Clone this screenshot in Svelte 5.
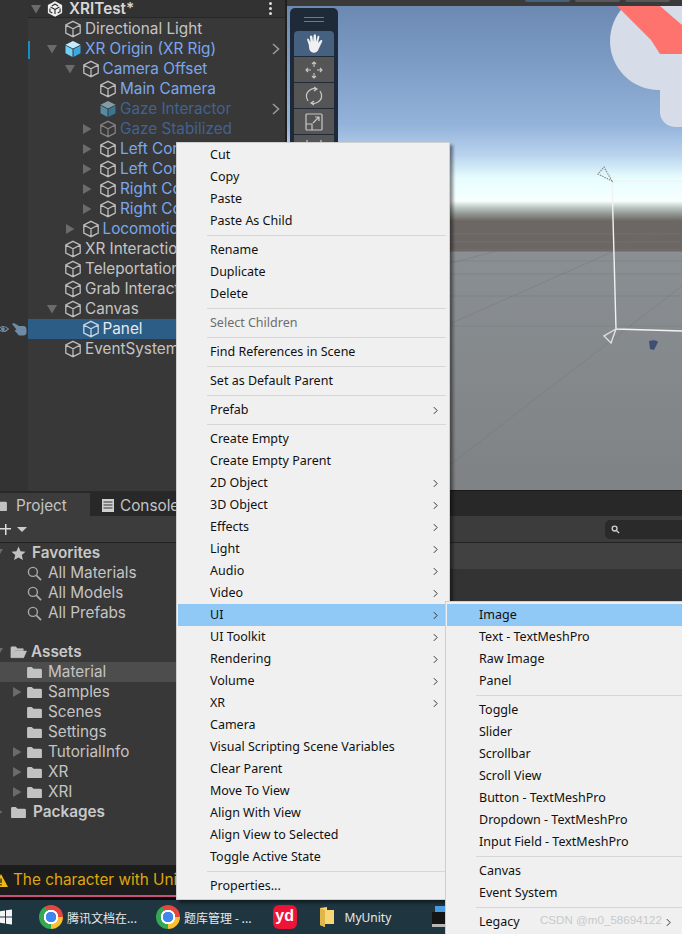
<script>
  const rows = [
    { t: 'Directional Light', d: 0, i: 'cube', c: '' },
    { t: 'XR Origin (XR Rig)', d: 0, a: 'down', i: 'prefab', c: 'blue', more: true, mark: true },
    { t: 'Camera Offset', d: 1, a: 'down', i: 'cube', c: 'blue' },
    { t: 'Main Camera', d: 2, i: 'cube', c: 'blue' },
    { t: 'Gaze Interactor', d: 2, i: 'prefab', c: 'dim', more: true, fade: true },
    { t: 'Gaze Stabilized', d: 2, a: 'right', i: 'cube', c: 'dim', fade: true },
    { t: 'Left Controller', d: 2, a: 'right', i: 'cube', c: 'blue' },
    { t: 'Left Controller', d: 2, a: 'right', i: 'cube', c: 'blue' },
    { t: 'Right Controller', d: 2, a: 'right', i: 'cube', c: 'blue' },
    { t: 'Right Controller', d: 2, a: 'right', i: 'cube', c: 'blue' },
    { t: 'Locomotion System', d: 1, a: 'right', i: 'cube', c: 'blue' },
    { t: 'XR Interaction Manager', d: 0, i: 'cube', c: '' },
    { t: 'Teleportation Area', d: 0, i: 'cube', c: '' },
    { t: 'Grab Interactable', d: 0, i: 'cube', c: '' },
    { t: 'Canvas', d: 0, a: 'down', i: 'cube', c: '' },
    { t: 'Panel', d: 1, i: 'cube', c: 'white', sel: true },
    { t: 'EventSystem', d: 0, i: 'cube', c: '' }
  ];
  const mainMenu = ['Cut','Copy','Paste','Paste As Child','-','Rename','Duplicate','Delete','-','~Select Children','-','Find References in Scene','-','Set as Default Parent','-','Prefab>','-','Create Empty','Create Empty Parent','2D Object>','3D Object>','Effects>','Light>','Audio>','Video>','*UI>','UI Toolkit>','Rendering>','Volume>','XR>','Camera','Visual Scripting Scene Variables','Clear Parent','Move To View','Align With View','Align View to Selected','Toggle Active State','-','Properties...'];
  const subMenu = ['*Image','Text - TextMeshPro','Raw Image','Panel','-','Toggle','Slider','Scrollbar','Scroll View','Button - TextMeshPro','Dropdown - TextMeshPro','Input Field - TextMeshPro','-','Canvas','Event System','-','Legacy>'];
  const parse = (s) => ({
    sep: s === '-',
    hot: s[0] === '*',
    off: s[0] === '~',
    more: s.endsWith('>'),
    label: s.replace(/^[*~]/, '').replace(/>$/, '')
  });
  const favs = ['All Materials', 'All Models', 'All Prefabs'];
  const assets = [
    { t: 'Material', hl: true }, { t: 'Samples', a: true }, { t: 'Scenes' }, { t: 'Settings' },
    { t: 'TutorialInfo', a: true }, { t: 'XR', a: true }, { t: 'XRI', a: true }
  ];
</script>

{#snippet cube(kind, fade)}
  {#if kind === 'prefab'}
    <svg class="cube" class:fade viewBox="0 0 18 18">
      <path d="M9 1 16.5 4.8 9 8.6 1.5 4.8Z" fill="#c4ecff"/>
      <path d="M1.5 5.6 8.5 9.2V17L1.5 13.3Z" fill="#6fd0fa"/>
      <path d="M16.5 5.6 9.5 9.2V17L16.5 13.3Z" fill="#3aa9e0"/>
    </svg>
  {:else}
    <svg class="cube" class:fade viewBox="0 0 18 18" fill="none" stroke="#bdbdbd" stroke-width="1.3">
      <path d="M9 1.3 16.2 5V13L9 16.7 1.8 13V5ZM1.8 5 9 8.8 16.2 5M9 8.8V16.7"/>
    </svg>
  {/if}
{/snippet}

{#snippet tri(dir)}
  <svg class="tri" viewBox="0 0 10 10">
    {#if dir === 'down'}<path d="M0 1H10L5 9.5Z"/>{:else}<path d="M1 0V10L9.5 5Z"/>{/if}
  </svg>
{/snippet}

{#snippet folder()}
  <svg class="folder" viewBox="0 0 16 14"><path d="M0 2.5Q0 1 1.5 1H5L7 3H14.5Q16 3 16 4.5V12Q16 13 14.5 13H1.5Q0 13 0 12Z" fill="#c2c2c2"/></svg>
{/snippet}

{#snippet menu(items, cls)}
  <div class="menu {cls}">
    {#each items.map(parse) as m}
      {#if m.sep}
        <div class="sep"></div>
      {:else}
        <div class="item" class:hot={m.hot} class:off={m.off}>
          <span>{m.label}</span>
          {#if m.more}
            <svg class="chev" viewBox="0 0 6 10" fill="none" stroke="#333" stroke-width="1.2"><path d="M1 1 5 5 1 9"/></svg>
          {/if}
        </div>
      {/if}
    {/each}
  </div>
{/snippet}

<div class="page">
  <div class="top">
    <section class="hier">
      <div class="gutter">
        <svg class="eye" viewBox="0 0 12 10" fill="none" stroke="#6f8aa3" stroke-width="1.3"><path d="M-2 5Q4 -1 10 5 4 11-2 5Z"/><circle cx="3.5" cy="5" r="1.6" fill="#6f8aa3"/></svg>
        <svg class="pick" viewBox="0 0 16 14"><path d="M1 2 3 1 8 4H13Q15.5 4.5 15.5 7V11Q15 13.5 12 13.5H8L3.5 8.5 5.5 7.5 1 2Z" fill="#6f8aa3"/></svg>
      </div>
      <div class="tree">
        <header class="scenehead">
          <svg class="tri big" viewBox="0 0 10 10"><path d="M0 1H10L5 9.5Z"/></svg>
          <svg class="unity" viewBox="0 0 18 18"><path d="M9 .3 17 4.6V13.4L9 17.7 1 13.4V4.6Z" fill="#f0f0f0"/><path d="M9 9.5V14.5M9 9.5 4 6.8M9 9.5 14 6.8M9 3.5 5.5 5.5M9 3.5 12.5 5.5M3.3 8.5V12L6 13.5M14.7 8.5V12L12 13.5" stroke="#2e2e2e" stroke-width="1.3" fill="none"/></svg>
          <b>XRITest*</b>
          <span class="kebab"><i></i><i></i><i></i></span>
        </header>
        {#each rows as r}
          <div class="row {r.c}" class:sel={r.sel} style="--d:{r.d}">
            {#if r.mark}<span class="mark"></span>{/if}
            <span class="arrow">{#if r.a}{@render tri(r.a)}{/if}</span>
            {@render cube(r.i, r.fade)}
            <span class="label">{r.t}</span>
            {#if r.more}
              <svg class="go" viewBox="0 0 8 12" fill="none" stroke="#9a9a9a" stroke-width="1.6"><path d="M1 1 6.5 6 1 11"/></svg>
            {/if}
          </div>
        {/each}
      </div>
    </section>
    <section class="scene">
      <svg class="world" viewBox="0 0 395 484" preserveAspectRatio="none">
        <g stroke="#6f7376" stroke-width="1" opacity=".35" fill="none">
          <path d="M0 255H395M0 268H395M0 290H395M0 320H395M0 300 210 245M0 390 395 215M130 484 395 280"/>
        </g>
        <g stroke="#7d7673" stroke-width="1" opacity=".6" fill="none">
          <path d="M0 228H395M0 236H395M0 244H395"/>
        </g>
        <g class="blob">
          <circle cx="372" cy="35" r="49" fill="#d6dce8"/>
          <rect x="373" y="40" width="40" height="81" rx="15" fill="#d6dce8"/>
          <path d="M330 0H373L395 19V48H373L364 34Z" fill="#fe736e"/>
        </g>
        <g fill="none" stroke="#f2f2f2" stroke-width="1.4">
          <path d="M325 175 329 323 395 325M325 175H395"/>
          <path d="M325 175 317 161 311 168Z" stroke="#8a8a8a" stroke-dasharray="1.5 1" stroke-width="1.2"/>
          <path d="M329 323 317 330 324 337Z" stroke="#e0e0e0"/>
        </g>
        <path d="M362 335Q369 333 371 336L367 344 363 343Z" fill="#3d4f72"/>
      </svg>
      <div class="topedge"><span class="tb blue-tb"></span><span class="tb"></span><span class="tb"></span></div>
      <div class="tools">
        <div class="grip"></div>
        <button class="active" aria-label="Hand">
          <svg class="hand" viewBox="0 0 20 20" fill="#f0f0f0"><path d="M5 11 3.5 6.5Q4 5 5 6L6.5 9 6 3.5Q7 2.5 8 3.5L8.8 8.5 9.3 2.5Q10.3 1.5 11.3 2.5L11.3 8.5 12.8 3.5Q14 3 14.3 4.2L13 9.5 15.5 7Q17 6.8 16.8 8L13.5 15Q12.5 18 9.5 18 6.5 18 5.5 15Z"/></svg>
        </button>
        <button aria-label="Move">
          <svg viewBox="0 0 20 20" fill="none" stroke="#c8c8c8" stroke-width="1.1"><path d="M10 2V7M10 13V18M2 10H7M13 10H18M8 4 10 2 12 4M8 16 10 18 12 16M4 8 2 10 4 12M16 8 18 10 16 12"/></svg>
        </button>
        <button aria-label="Rotate">
          <svg viewBox="0 0 20 20" fill="none" stroke="#c8c8c8" stroke-width="1.2"><path d="M4 15Q0 8 6 4Q9 2 12 3M16 5Q20 12 14 16Q11 18 8 17M10 1 13 3 10 5M10 15 7 17 10 19"/></svg>
        </button>
        <button aria-label="Scale">
          <svg viewBox="0 0 20 20" fill="none" stroke="#c8c8c8" stroke-width="1.2"><rect x="2" y="2" width="16" height="16" rx="1"/><path d="M2 12H8V18M9 11 15 5M11 5H15V9"/></svg>
        </button>
        <button aria-label="Rect">
          <svg viewBox="0 0 20 20" fill="none" stroke="#c8c8c8" stroke-width="1.2"><path d="M3 2V8M17 2V8M3 5H17"/></svg>
        </button>
      </div>
    </section>
  </div>

  <section class="project">
    <nav class="tabs">
      <div class="tab on">
        <svg class="folder tabfolder" viewBox="0 0 16 14"><path d="M0 2.5Q0 1 1.5 1H5L7 3H14.5Q16 3 16 4.5V12Q16 13 14.5 13H1.5Q0 13 0 12Z" fill="#c2c2c2"/></svg>
        <span>Project</span>
      </div>
      <div class="tab">
        <svg class="doc" viewBox="0 0 12 13"><rect width="12" height="13" fill="#d0d0d0"/><path d="M1.5 3H10.5M1.5 6H10.5M1.5 9H10.5" stroke="#333" stroke-width="1.2"/></svg>
        <span>Console</span>
      </div>
    </nav>
    <div class="bar">
      <span class="plus"></span>
      <span class="caret"></span>
      <div class="search">
        <svg viewBox="0 0 10 10" fill="none" stroke="#cfcfcf" stroke-width="1.5"><circle cx="4" cy="4" r="2.7"/><path d="M6 6 9 9"/></svg>
      </div>
    </div>
    <div class="panes">
      <div class="files">
        <div class="frow head">
          <span class="cut">{@render tri('down')}</span>
          <svg class="star" viewBox="0 0 16 16"><path d="M8 .5 10.2 5.5 15.5 6 11.5 9.6 12.7 15 8 12.2 3.3 15 4.5 9.6 .5 6 5.8 5.5Z" fill="#c2c2c2"/></svg>
          <b>Favorites</b>
        </div>
        {#each favs as f}
          <div class="frow sub">
            <span class="slot"></span>
            <svg class="glass" viewBox="0 0 16 16" fill="none" stroke="#a8a8a8" stroke-width="1.5"><circle cx="6.3" cy="6.3" r="4.8"/><path d="M10 10 15 15" stroke-width="2"/></svg>
            <span>{f}</span>
          </div>
        {/each}
        <div class="frow head gap">
          <span class="cut">{@render tri('down')}</span>
          <svg class="openf" viewBox="0 0 18 14"><path d="M1 13V2.5Q1 1.5 2 1.5H6L8 3.5H14V5.5H5.5L2.5 12.5 5.5 6H17.5L14.5 13Z" fill="#c2c2c2" stroke="#c2c2c2" stroke-width=".6" fill-rule="evenodd"/></svg>
          <b>Assets</b>
        </div>
        {#each assets as a}
          <div class="frow sub" class:hl={a.hl}>
            <span class="slot">{#if a.a}{@render tri('right')}{/if}</span>
            {@render folder()}
            <span>{a.t}</span>
          </div>
        {/each}
        <div class="frow head">
          <span class="cut">{@render tri('right')}</span>
          {@render folder()}
          <b>Packages</b>
        </div>
      </div>
      <div class="preview"><div class="prevhead"></div></div>
    </div>
  </section>

  <footer class="status">
    <svg class="warn" viewBox="0 0 14 13"><path d="M7 0 14 13H0Z" fill="#f0b90f"/><path d="M7 4.5V9M7 10V11.5" stroke="#222" stroke-width="1.3"/></svg>
    <span>The character with Unicode value</span>
  </footer>
  <div class="pink"></div>
  <div class="blackline"></div>

  <div class="taskbar">
    <svg class="win" viewBox="0 0 12 16"><path d="M-1 2.5 5 1.5V7.5H-1ZM6 1.3 12 .5V7.5H6ZM-1 8.5H5V14.5L-1 13.5ZM6 8.5H12V15.5L6 14.7Z" fill="#f4f4f4"/></svg>
    <span class="chrome"></span><span class="tlabel">腾讯文档在...</span>
    <span class="chrome second"></span><span class="tlabel">题库管理 - ...</span>
    <span class="yd">yd</span>
    <svg class="tfolder" viewBox="0 0 14 20"><path d="M0 1 7 0V3H14V17H5V20L0 18Z" fill="#f7d774"/><path d="M0 1 5 3V20L0 18Z" fill="#e0b64a"/></svg>
    <span class="tlabel unity-l">MyUnity</span>
    <svg class="monitor" viewBox="0 0 16 22"><rect x="3" y="0" width="13" height="8" fill="#4a9be0"/><rect x="0" y="6" width="14" height="12" fill="#151515"/><rect x="0" y="18" width="14" height="3" fill="#b8b8b8"/></svg>
  </div>

  {@render menu(mainMenu, 'main')}
  {@render menu(subMenu, 'side')}
  <span class="mark-csdn">CSDN @m0_58694122</span>
</div>

<style>
  :global(body) { margin: 0; background: #383838; }
  .page {
    position: relative; width: 682px; height: 934px; overflow: hidden;
    background: #383838; color: #c4c4c4;
    font-family: Inter, "Noto Sans", "Noto Sans CJK SC", sans-serif;
    font-size: 15.3px;
  }
  svg { display: block; flex: none; }

  .top { display: flex; height: 491px; }
  .hier { display: flex; width: 285px; flex: none; background: #383838; border-right: 2px solid #202020; box-sizing: content-box; }
  .gutter { width: 28px; flex: none; background: #333; position: relative; }
  .eye { position: absolute; left: 0; top: 324px; width: 10px; height: 10px; }
  .pick { position: absolute; left: 11px; top: 322px; width: 16px; height: 14px; }
  .tree { flex: 1; min-width: 0; overflow: hidden; }
  .scenehead {
    display: flex; align-items: center; height: 18px; margin-bottom: 1px; background: #323232;
    padding-left: 3px; border-bottom: 1px solid #272727; box-sizing: border-box;
  }
  .scenehead b { font-weight: 600; color: #d8d8d8; margin-left: 6px; line-height: 16px; }
  .tri { width: 10px; height: 10px; fill: #6b6b6b; }
  .unity { width: 16px; height: 16px; margin-left: 6px; }
  .kebab { margin-left: auto; margin-right: 13px; display: flex; flex-direction: column; gap: 2px; }
  .kebab i { width: 3px; height: 3px; background: #ddd; border-radius: 50%; display: block; }

  .row {
    position: relative; display: flex; align-items: center; height: 20px;
    padding-left: calc(19px + var(--d) * 17.5px);
    white-space: nowrap;
  }
  .row .arrow { width: 17px; flex: none; display: flex; align-items: center; }
  .row .label { margin-left: 3px; margin-bottom: 1px; }
  .cube { width: 18px; height: 18px; }
  .cube.fade { opacity: .55; }
  .blue { color: #7aa7ec; }
  .dim { color: #42628f; }
  .white { color: #e4e9ee; }
  .sel { background: #2c5d87; }
  .sel .cube path { stroke: #c9d7e2; }
  .mark { position: absolute; left: 0; top: 2px; width: 2px; height: 18px; background: #1a8bc9; }
  .go { position: absolute; right: 5px; top: 4px; width: 8px; height: 12px; }

  .scene { position: relative; flex: 1; min-width: 0; overflow: hidden; background: linear-gradient(180deg, #6b89b1 6px, #7c9bc4 60px, #94b3da 125px, #b9d3ee 155px, #e6fdfe 178px, #f8fffe 201px, #b7c3bf 208px, #8b8f8a 215px, #6d6764 221px, #6c6664 251px, #8a8f93 252px, #7f8386 480px); border-bottom: 1px solid #1a1a1a; box-sizing: border-box; }
  .world { position: absolute; left: 0; top: 6px; width: 100%; height: 484px; }
  .blob { filter: blur(.6px); }
  .topedge { position: absolute; inset: 0 0 auto 0; height: 6px; background: #3a3a3a; display: flex; gap: 5px; padding-left: 238px; }
  .tb { width: 45px; height: 2px; background: #585858; border-radius: 0 0 3px 3px; }
  .blue-tb { background: #46607f; }
  .tools {
    position: absolute; left: 3px; top: 8px; width: 48px; height: 200px; box-sizing: border-box;
    padding: 4px; background: #1e2a38; border-radius: 5px; display: flex; flex-direction: column; gap: 1px;
  }
  .grip { height: 5px; flex: none; margin: 5px 10px 8px; border-top: 1px solid #777; border-bottom: 1px solid #777; box-sizing: border-box; }
  .tools button { all: unset; box-sizing: border-box; height: 25px; flex: none; background: #555; display: flex; align-items: center; justify-content: center; }
  .tools button svg { width: 20px; height: 20px; }
  .tools .active { background: #46607f; border-radius: 4px 4px 0 0; }
  .tools .hand { width: 23px; height: 23px; }

  .project { height: 374px; position: relative; }
  .tabs { display: flex; height: 25px; background: #282828; box-sizing: border-box; padding-top: 2px; }
  .tab { display: flex; align-items: center; width: 90px; box-sizing: border-box; padding-left: 12px; }
  .tab span { margin-top: 2px; }
  .tab.on { background: #3c3c3c; padding-left: 16px; position: relative; }
  .tabfolder { position: absolute; left: -8px; top: 6px; }
  .doc { width: 12px; height: 13px; margin-right: 6px; margin-top: 1px; }
  .bar { position: relative; display: flex; align-items: center; height: 27px; background: #3c3c3c; border-bottom: 1px solid #232323; box-sizing: border-box; }
  .plus { width: 11px; height: 11px; background: linear-gradient(#ddd,#ddd) center/100% 1.5px no-repeat, linear-gradient(#ddd,#ddd) center/1.5px 100% no-repeat; }
  .caret { width: 0; height: 0; margin-left: 6px; border: 5px solid transparent; border-top: 5px solid #ccc; border-bottom: 0; }
  .search { position: absolute; left: 605px; top: 4px; width: 90px; height: 19px; background: #2a2a2a; border-radius: 5px; display: flex; align-items: center; padding-left: 6px; box-sizing: border-box; }
  .search svg { width: 9px; height: 9px; }

  .panes { display: flex; height: 322px; }
  .files { width: 176px; flex: none; white-space: nowrap; overflow: hidden; }
  .preview { flex: 1; background: #333; }
  .prevhead { height: 26px; background: #414141; }
  .frow { display: flex; align-items: center; height: 20px; }
  .head b { font-weight: 600; color: #c8c8c8; margin-left: 6px; margin-bottom: 1px; }
  .head .cut { width: 10px; margin-left: -7px; flex: none; display: flex; }
  .head.gap { margin-top: 19px; }
  .head .folder { margin-left: 8px; margin-right: 1px; }
  .star { width: 15px; height: 15px; margin-left: 8px; }
  .openf { width: 17px; height: 14px; margin-left: 7px; margin-right: -2px; }
  .slot { width: 15px; margin-left: 12px; flex: none; display: flex; }
  .sub > span:last-child { margin-left: 6px; margin-bottom: 1px; }
  .hl { background: #4d4d4d; }
  .folder { width: 15px; height: 13px; }
  .glass { width: 15px; height: 15px; }

  .status { display: flex; align-items: center; height: 30px; background: #1d1d1d; color: #dfa70f; white-space: nowrap; overflow: hidden; }
  .status span { margin-bottom: 1px; }
  .warn { width: 14px; height: 13px; margin-left: -6px; margin-right: 5px; }
  .pink { height: 2px; background: #c94f7c; }
  .blackline { height: 3px; background: #0a0a0a; }

  .taskbar { display: flex; align-items: center; height: 34px; background: #1f3641; color: #e8e8e8; font-size: 12px; white-space: nowrap; overflow: hidden; font-family: "Noto Sans CJK SC", "Noto Sans", sans-serif; }
  .win { width: 12px; height: 16px; }
  .chrome { width: 24px; height: 24px; border-radius: 50%; margin-left: 27px; flex: none; background: radial-gradient(circle, #3f86ee 0 5px, #fff 5.5px 7px, transparent 7.5px), conic-gradient(from 330deg, #e8453c 0 120deg, #fbc02d 120deg 210deg, #34a853 210deg 360deg); }
  .chrome.second { margin-left: 19px; }
  .tlabel { margin-left: 4px; }
  .yd { width: 24px; height: 24px; margin-left: 21px; border-radius: 6px; background: #ee1438; color: #fff; font: 700 16px/22px "Liberation Sans", sans-serif; text-align: center; flex: none; }
  .tfolder { width: 14px; height: 20px; margin-left: 23px; }
  .unity-l { margin-left: 11px; font-family: "Noto Sans", sans-serif; }
  .monitor { width: 16px; height: 22px; margin-left: 41px; }

  .menu {
    position: absolute; box-sizing: border-box; background: #f0f0f0; border: 1px solid #cfcfcf;
    padding: 1px 2px 0 1px; color: #000; font-family: "Noto Sans", "Liberation Sans", sans-serif; font-size: 12.5px;
    box-shadow: 3px 3px 3px rgba(0, 0, 0, .45);
  }
  .main { left: 176px; top: 142px; width: 274px; height: 758px; }
  .side { left: 445px; top: 601px; width: 250px; height: 345px; padding-top: 2px; }
  .side .item { padding-right: 21px; }
  .item { position: relative; display: flex; align-items: center; justify-content: space-between; box-sizing: border-box; height: 22px; padding: 0 9px 2px 32px; color: #101010; }
  .item .chev { margin-top: 2px; }
  .hot { background: #90c8f6; }
  .off { color: #6d6d6d; }
  .sep { height: 1px; margin: 3px 1px 3px 29px; background: #d7d7d7; }
  .chev { width: 5px; height: 9px; }
  .mark-csdn { position: absolute; left: 540px; top: 912px; font: 11.6px/16px "Liberation Sans", sans-serif; color: #c9c9c9; }
</style>
